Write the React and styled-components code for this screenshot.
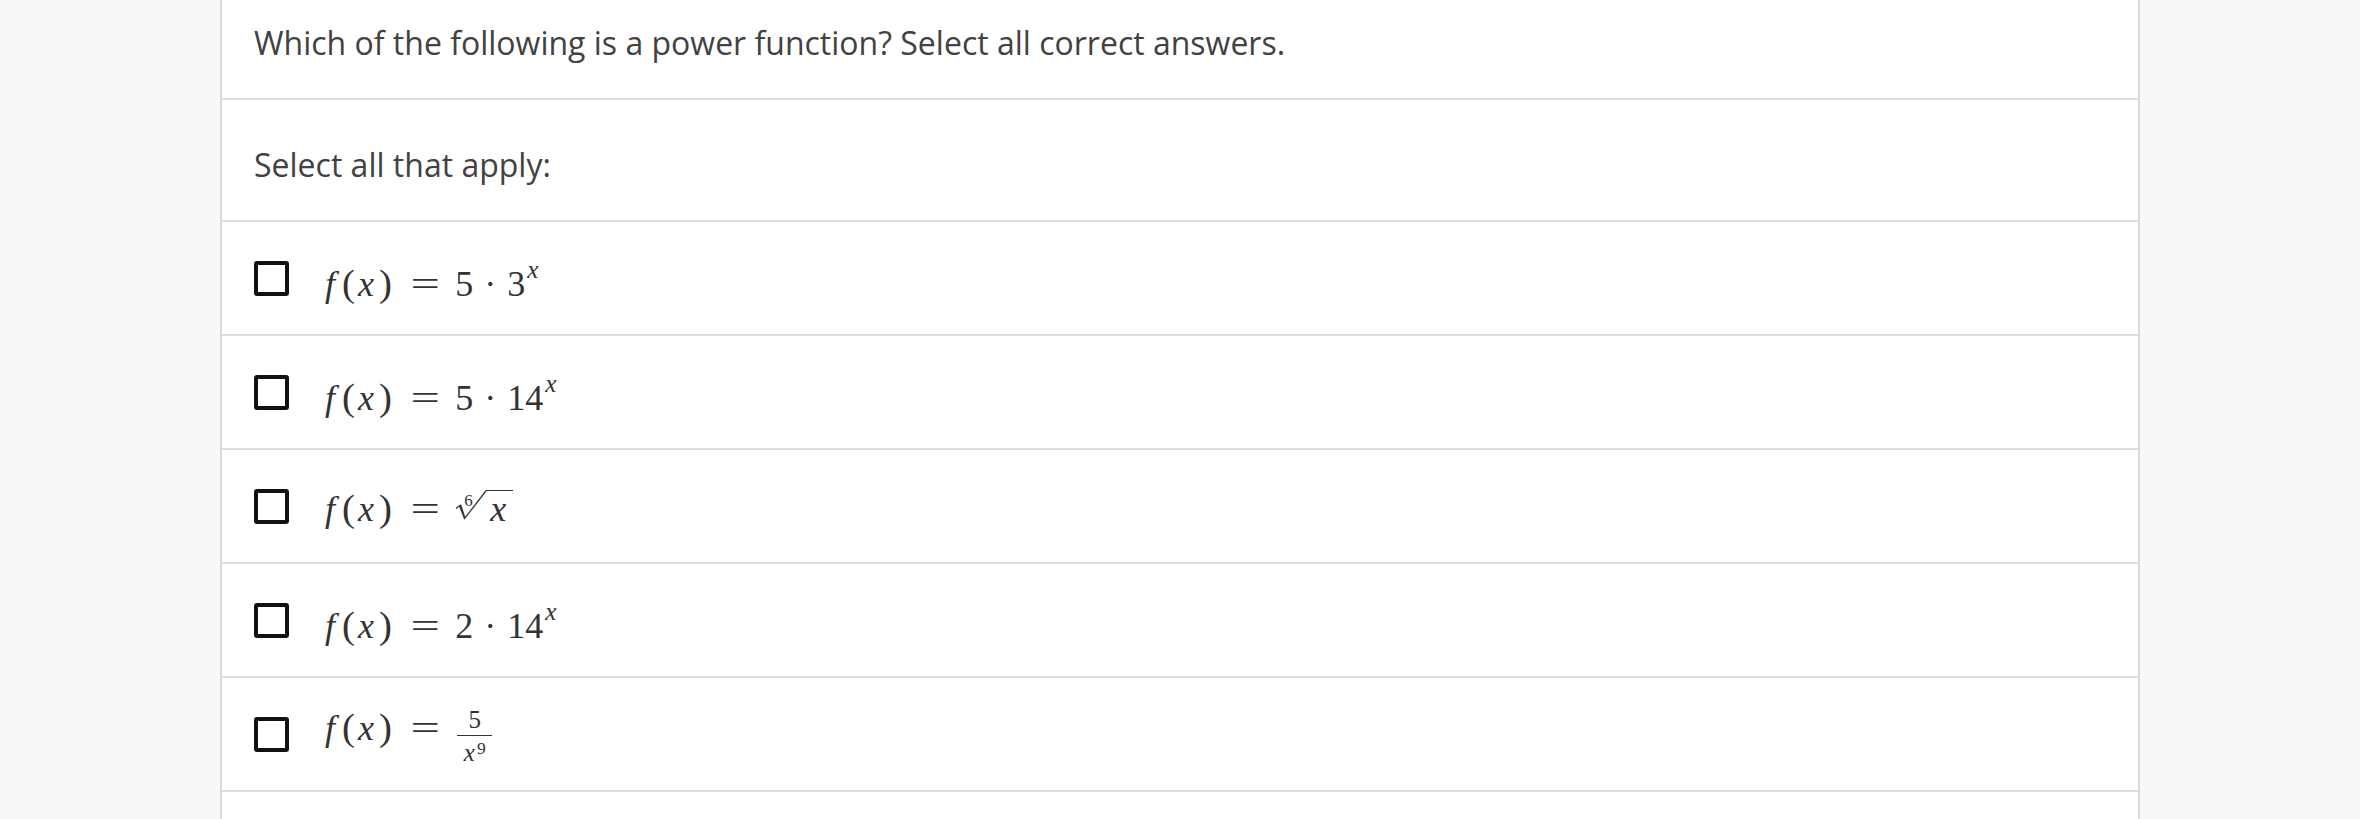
import React from 'react';
import styled, { createGlobalStyle } from 'styled-components';

const GlobalStyle = createGlobalStyle`
  html, body {
    margin: 0;
    padding: 0;
    background: #f7f7f7;
    overflow: hidden;
  }
`;

const Page = styled.div`
  min-height: 100vh;
  display: flex;
  justify-content: center;
`;

const Card = styled.div`
  width: 1920px;
  box-sizing: border-box;
  background: #fff;
  border-left: 2px solid #dadada;
  border-right: 2px solid #dadada;
  display: flex;
  flex-direction: column;
  font-family: 'Open Sans', 'Liberation Sans', sans-serif;
  color: #424242;
`;

const Section = styled.div`
  border-bottom: 2px solid #dcdcdc;
  font-size: 32px;
  line-height: 44px;
  padding: ${props => props.$pad || '21px 32px 33px'};
`;

const OptionRow = styled.label`
  height: 112px;
  border-bottom: 2px solid #dcdcdc;
  padding: 0 32px;
  display: flex;
  align-items: center;
  gap: 36px;
  cursor: pointer;
`;

const Box = styled.span`
  width: 35px;
  height: 35px;
  box-sizing: border-box;
  border: 4px solid #111;
  border-radius: 3px;
  flex-shrink: 0;
`;

const Rest = styled.div`
  flex: 1;
`;

/* math pieces */
const Formula = styled.span`
  font-family: 'Liberation Serif', 'DejaVu Serif', serif;
  font-size: 36px;
  line-height: 1;
  color: #333;
  white-space: nowrap;
  transform: translateY(2px);
`;

const Var = styled.i`
  font-family: 'Liberation Serif', serif;
  font-style: italic;
  display: inline-block;
  margin-left: ${props => props.$ml || '0'};
  margin-right: ${props => props.$mr || '0'};
`;

const Paren = styled.span`
  font-size: 1.08em;
  margin: 0 2px;
`;

const Rel = styled.span`
  display: inline-block;
  transform: scaleX(1.45);
  margin: 0 20px 0 21px;
`;

const Bin = styled.span`
  margin: 0 ${props => props.$gap || '11px'};
`;

const Sup = styled.span`
  font-size: 0.7em;
  vertical-align: ${props => props.$lift || '18px'};
  margin-left: 2px;
`;

const Frac = styled.span`
  display: inline-flex;
  flex-direction: column;
  align-items: center;
  vertical-align: 12px;
  font-size: 25px;
  padding: 0 2px;
`;

const Num = styled.span`
  line-height: 1;
  padding: 0 0 3px;
`;

const Bar = styled.span`
  align-self: stretch;
  width: 35px;
  height: 1.5px;
  background: #333;
`;

const Den = styled.span`
  line-height: 1;
  padding-top: 4px;
`;

const Root = styled.span`
  display: inline-block;
  position: relative;
  padding-left: 31px;
`;

const RootSign = styled.svg`
  position: absolute;
  left: 0;
  top: 0;
  overflow: visible;
`;

const RootIndex = styled.span`
  position: absolute;
  left: 9px;
  top: 2px;
  font-size: 17px;
  line-height: 1;
`;

const Radicand = styled.span`
  display: inline-block;
  border-top: 1.5px solid #333;
  padding: 0 7px 0 4px;
`;

const Fx = () => (
  <>
    <Var $mr="5px">f</Var>
    <Paren>(</Paren>
    <Var $ml="1px" $mr="3px">x</Var>
    <Paren>)</Paren>
    <Rel>=</Rel>
  </>
);

const options = [
  (
    <>
      <Fx />5<Bin>·</Bin>3<Sup><Var>x</Var></Sup>
    </>
  ),
  (
    <>
      <Fx />5<Bin>·</Bin>14<Sup><Var>x</Var></Sup>
    </>
  ),
  (
    <>
      <Fx />
      <Root>
        <RootSign width="32" height="30" viewBox="0 0 31 30">
          <path d="M0.5 18.5 L3.6 16" stroke="#333" strokeWidth="1.2" fill="none" />
          <path d="M3.2 15.4 L5.6 14.2 L9.6 26.4 L8.6 29.2 Z" fill="#333" />
          <path d="M8.6 29.2 L30.6 0.75" stroke="#333" strokeWidth="1.3" fill="none" />
        </RootSign>
        <RootIndex>6</RootIndex>
        <Radicand><Var>x</Var></Radicand>
      </Root>
    </>
  ),
  (
    <>
      <Fx />2<Bin>·</Bin>14<Sup><Var>x</Var></Sup>
    </>
  ),
  (
    <>
      <Fx />
      <Frac>
        <Num>5</Num>
        <Bar />
        <Den>
          <Var>x</Var>
          <Sup $lift="7px">9</Sup>
        </Den>
      </Frac>
    </>
  ),
];

export default function App() {
  return (
    <>
      <GlobalStyle />
      <Page>
        <Card>
          <Section>Which of the following is a power function? Select all correct answers.</Section>
          <Section $pad="43px 32px 33px">Select all that apply:</Section>
          {options.map((content, i) => (
            <OptionRow key={i}>
              <Box />
              <Formula>{content}</Formula>
            </OptionRow>
          ))}
          <Rest />
        </Card>
      </Page>
    </>
  );
}
